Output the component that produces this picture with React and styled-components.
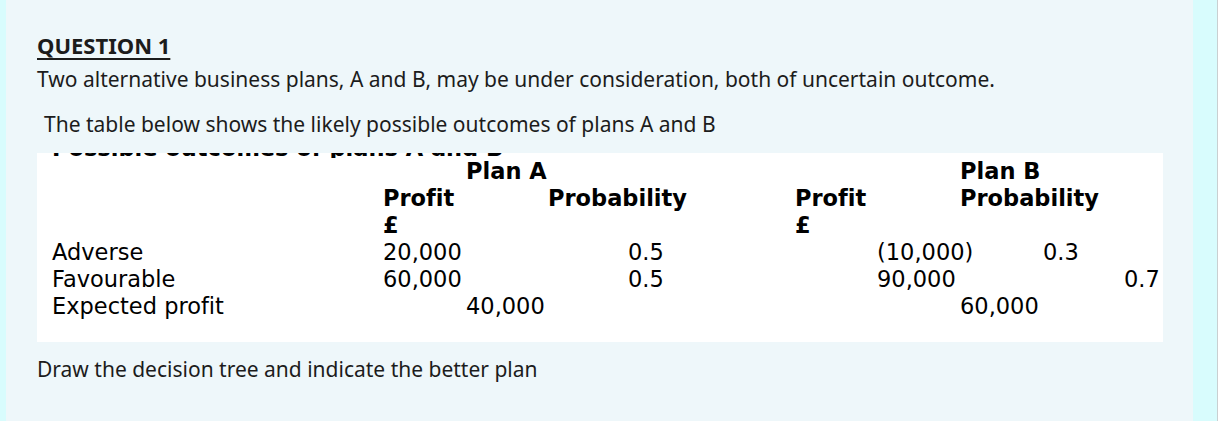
import * as React from 'react';
import styled, { createGlobalStyle } from 'styled-components';

const GlobalStyle = createGlobalStyle`
    html, body {
        margin: 0;
        padding: 0;
        background: #ffffff;
    }
`;

const Page = styled.div`
    display: flex;
    width: 1223px;
    height: 421px;
    overflow: hidden;
`;

const Strip = styled.div`
    flex: 0 0 ${(p) => p.$w}px;
    background: #d8fcfd;
`;

const Edge = styled.div`
    flex: 0 0 1px;
    background: #c9cfd1;
`;

const Panel = styled.div`
    flex: 0 0 1187px;
    background: #eef7fa;
    padding: 30px 30px 0 31px;
    box-sizing: border-box;
    font-family: "Noto Sans", "Open Sans", sans-serif;
    font-size: 21px;
    color: #1c1c1c;
`;

const Heading = styled.div`
    font-weight: bold;
    font-size: 22px;
    line-height: 30px;
    text-decoration: underline;
    text-underline-offset: 4px;
    text-decoration-thickness: 2px;
`;

const Line = styled.div`
    line-height: 30px;
    margin-top: ${(p) => p.$mt}px;
    padding-left: ${(p) => p.$indent || 0}px;
    white-space: nowrap;
`;

const Sheet = styled.div`
    margin-top: 14px;
    width: 1126px;
    height: 189px;
    background: #ffffff;
    overflow: hidden;
    padding-left: 15px;
    box-sizing: border-box;
    font-family: "DejaVu Sans", sans-serif;
    font-size: 22.5px;
    font-variant-ligatures: none;
    color: #000;
`;

const CutLine = styled.div`
    height: 5px;
    overflow: hidden;
    font-weight: bold;
    white-space: nowrap;

    span {
        display: block;
        margin-top: -18px;
        line-height: 26px;
    }
`;

const Grid = styled.div`
    display: grid;
    grid-template-columns: 331px 83px 82px 80px 167px 82px 83px 83px 81px 1fr;
    grid-auto-rows: 27px;
    line-height: 27px;
`;

const Cell = styled.div`
    grid-column: ${(p) => p.$col};
    grid-row: ${(p) => p.$row};
    font-weight: ${(p) => (p.$bold ? 'bold' : 'normal')};
    white-space: nowrap;
`;

const cells = [
    [1, 3, 'Plan A', true], [1, 8, 'Plan B', true],
    [2, 2, 'Profit', true], [2, 4, 'Probability', true], [2, 6, 'Profit', true], [2, 8, 'Probability', true],
    [3, 2, '£', true], [3, 6, '£', true],
    [4, 1, 'Adverse'], [4, 2, '20,000'], [4, 5, '0.5'], [4, 7, '(10,000)'], [4, 9, '0.3'],
    [5, 1, 'Favourable'], [5, 2, '60,000'], [5, 5, '0.5'], [5, 7, '90,000'], [5, 10, '0.7'],
    [6, 1, 'Expected profit'], [6, 3, '40,000'], [6, 8, '60,000'],
];

const App = () => {
    return (
        <>
            <GlobalStyle />
            <Page>
                <Strip $w={6} />
                <Panel>
                    <Heading>QUESTION 1</Heading>
                    <Line $mt={4}>Two alternative business plans, A and B, may be under consideration, both of uncertain outcome.</Line>
                    <Line $mt={15} $indent={7}>The table below shows the likely possible outcomes of plans A and B</Line>
                    <Sheet>
                        <CutLine><span>Possible outcomes of plans A and B</span></CutLine>
                        <Grid>
                            {cells.map(([row, col, text, bold], i) => (
                                <Cell key={i} $row={row} $col={col} $bold={bold}>{text}</Cell>
                            ))}
                        </Grid>
                    </Sheet>
                    <Line $mt={12}>Draw the decision tree and indicate the better plan</Line>
                </Panel>
                <Strip $w={24} />
                <Edge />
            </Page>
        </>
    );
};

export default App;
